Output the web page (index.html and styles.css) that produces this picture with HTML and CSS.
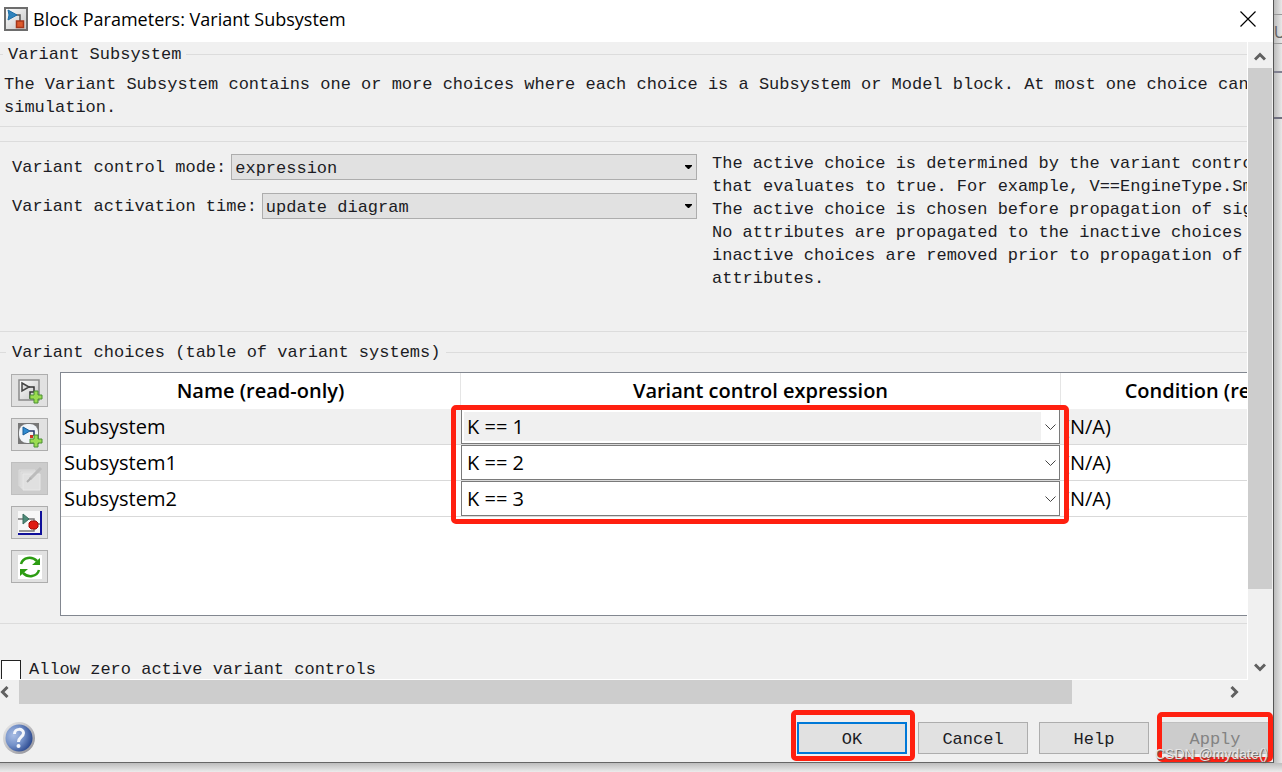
FILE: index.html
```html
<!DOCTYPE html>
<html lang="en">
<head>
  <meta charset="UTF-8" />
  <meta name="viewport" content="width=device-width, initial-scale=1.0" />
  <title>Block Parameters: Variant Subsystem</title>
  <link rel="stylesheet" href="styles.css">
</head>
<body>
  <div class="dialog">
    <header class="titlebar">
      <svg class="app-icon" width="24" height="24" viewBox="0 0 24 24">
        <defs><linearGradient id="tile" x2="1" y2="1"><stop stop-color="#fff"/><stop offset="1" stop-color="#c4c4c4"/></linearGradient></defs>
        <rect x="1" y="1" width="22" height="22" fill="url(#tile)" stroke="#6d6d6d" stroke-width="2"/>
        <path d="M10 8h6v6" fill="none" stroke="#555" stroke-width="1.500"/>
        <path d="M4 3l9 5-9 5 1-5z" fill="#2f83bd" stroke="#1c6fa8"/>
        <rect x="12.500" y="14" width="7" height="6.500" fill="#dc5a2c" stroke="#a5361a" stroke-width="1.500"/>
      </svg>
      <h1>Block Parameters: Variant Subsystem</h1>
      <button class="close" aria-label="Close">
        <svg width="16" height="16" viewBox="0 0 16 16"><path d="M.5.5l15 15M15.500.5l-15 15" stroke="#000" stroke-width="1.200"/></svg>
      </button>
    </header>

    <main class="scroll-area">
      <div class="pane">
        <section class="about">
          <h2 class="legend">Variant Subsystem</h2>
          <p>The Variant Subsystem contains one or more choices where each choice is a Subsystem or Model block. At most one choice can be<br>simulation.</p>
        </section>

        <section class="settings">
          <div class="fields">
            <div class="field">
              <label for="mode">Variant control mode:</label>
              <div class="drop">
                <select id="mode"><option>expression</option></select>
                <svg width="7" height="4" viewBox="0 0 7 4"><path d="M0 0h7v1L4 4H3L0 1z"/></svg>
              </div>
            </div>
            <div class="field">
              <label for="time">Variant activation time:</label>
              <div class="drop">
                <select id="time"><option>update diagram</option></select>
                <svg width="7" height="4" viewBox="0 0 7 4"><path d="M0 0h7v1L4 4H3L0 1z"/></svg>
              </div>
            </div>
          </div>
          <p>The active choice is determined by the variant control<br>that evaluates to true. For example, V==EngineType.Small<br>The active choice is chosen before propagation of signal<br>No attributes are propagated to the inactive choices and<br>inactive choices are removed prior to propagation of signal<br>attributes.</p>
        </section>

        <section class="choices">
          <h2 class="legend">Variant choices (table of variant systems)</h2>
          <div class="choices-body">
            <div class="tools">
              <button aria-label="Add subsystem choice">
                <svg width="26" height="26" viewBox="0 0 26 26">
                  <rect x="2" y="2" width="20" height="20" fill="url(#tile)" stroke="#8a8a8a" stroke-width="1.500"/>
                  <path d="M5 5l7 4-7 4z" fill="#ddd" stroke="#444" stroke-width="1.500"/><path d="M12 9h5v5h-4v6h4" fill="none" stroke="#333" stroke-width="1.500"/>
                  <path d="M17 13h4v4h4v4h-4v4h-4v-4h-4v-4h4z" fill="#9bdc50" stroke="#4b8f35"/>
                </svg>
              </button>
              <button aria-label="Add model choice">
                <svg width="26" height="26" viewBox="0 0 26 26">
                  <rect x="1" y="1" width="21" height="21" fill="#777"/>
                  <rect x="2" y="2" width="19" height="19" rx="8" fill="#f0f4f8"/>
                  <path d="M6 5l7 4-7 4z" fill="#2f8ad0" stroke="#175c98"/><path d="M13 9h4v5" fill="none" stroke="#236" stroke-width="1.500"/>
                  <rect x="13" y="13" width="3" height="3" fill="#c32"/>
                  <path d="M17 13h4v4h4v4h-4v4h-4v-4h-4v-4h4z" fill="#9bdc50" stroke="#4b8f35"/>
                </svg>
              </button>
              <button aria-label="Edit choice" disabled>
                <svg width="26" height="26" viewBox="0 0 26 26">
                  <path d="M2 4h16v16H2z" fill="#d4d4d4" stroke="#dcdcdc"/><path d="M4 6h16v16H4z" fill="#d9d9d9" stroke="#e2e2e2"/><path d="M6 8h17v16H6z" fill="#e0e0e0" stroke="#e8e8e8"/>
                  <path d="M13 13L24 2" stroke="#bcbcbc" stroke-width="3"/><path d="M10 16l4-4" stroke="#b0b0b0" stroke-width="2"/>
                </svg>
              </button>
              <button aria-label="Open block">
                <svg width="26" height="26" viewBox="0 0 26 26">
                  <rect x="1" y="1" width="24" height="24" fill="#f7f7f7"/>
                  <path d="M24 1v23H1" fill="none" stroke="#10109a" stroke-width="2"/>
                  <path d="M1 9h16v12H2M17 14h6" fill="none" stroke="#777" stroke-width="1.500"/>
                  <path d="M6 4l6 5-6 5z" fill="#4d8b78" stroke="#3a6d5e"/>
                  <path d="M14 11h5l2 2v4l-2 2h-5l-2-2v-4z" fill="#e0190f" stroke="#a01008"/>
                </svg>
              </button>
              <button aria-label="Refresh">
                <svg width="26" height="26" viewBox="0 0 26 26">
                  <rect x="1" y="1" width="24" height="24" fill="#fff"/>
                  <path d="M4 10C6 3 15 2 20 7M22 16c-2 7-11 8-16 3" fill="none" stroke="#2c9c12" stroke-width="2.500"/>
                  <path d="M23 4v7h-8zM3 22v-7h8z" fill="#2c9c12"/>
                </svg>
              </button>
            </div>
            <div class="table-box">
              <table>
                <thead>
                  <tr><th class="col-name">Name (read-only)</th><th class="col-expr">Variant control expression</th><th class="col-cond">Condition (read-only)</th></tr>
                </thead>
                <tbody>
                  <tr class="selected">
                    <td>Subsystem</td>
                    <td><div class="combo"><select aria-label="Subsystem expression"><option>K == 1</option></select><svg width="11" height="6" viewBox="0 0 11 6"><path d="M.5.5l5 5 5-5" fill="none" stroke="#444"/></svg></div></td>
                    <td>(N/A)</td>
                  </tr>
                  <tr>
                    <td>Subsystem1</td>
                    <td><div class="combo"><select aria-label="Subsystem1 expression"><option>K == 2</option></select><svg width="11" height="6" viewBox="0 0 11 6"><path d="M.5.5l5 5 5-5" fill="none" stroke="#444"/></svg></div></td>
                    <td>(N/A)</td>
                  </tr>
                  <tr>
                    <td>Subsystem2</td>
                    <td><div class="combo"><select aria-label="Subsystem2 expression"><option>K == 3</option></select><svg width="11" height="6" viewBox="0 0 11 6"><path d="M.5.5l5 5 5-5" fill="none" stroke="#444"/></svg></div></td>
                    <td>(N/A)</td>
                  </tr>
                </tbody>
              </table>
              <div class="mark mark-table"></div>
            </div>
          </div>
        </section>

        <div class="allow-zero">
          <input type="checkbox" id="allow-zero">
          <label for="allow-zero">Allow zero active variant controls</label>
        </div>
      </div>

      <div class="vbar">
        <svg width="12" height="9" viewBox="0 0 12 9"><path d="M1 7.500l5-5 5 5" fill="none" stroke="#606060" stroke-width="3"/></svg>
        <div class="vthumb"></div>
        <svg width="12" height="9" viewBox="0 0 12 9"><path d="M1 1.500l5 5 5-5" fill="none" stroke="#606060" stroke-width="3"/></svg>
      </div>
      <div class="hbar">
        <svg width="9" height="12" viewBox="0 0 9 12"><path d="M7.500 1l-5 5 5 5" fill="none" stroke="#606060" stroke-width="3"/></svg>
        <div class="hthumb"></div>
        <svg width="9" height="12" viewBox="0 0 9 12"><path d="M1.500 1l5 5-5 5" fill="none" stroke="#606060" stroke-width="3"/></svg>
      </div>
    </main>

    <footer class="actions">
      <button class="help-icon" aria-label="Help topics">
        <svg width="34" height="34" viewBox="0 0 34 34">
          <defs>
            <radialGradient id="ball" cx=".3" cy=".4" r=".75"><stop stop-color="#a9bde4"/><stop offset=".5" stop-color="#7390c8"/><stop offset="1" stop-color="#24428a"/></radialGradient>
            <linearGradient id="rim" x2="1" y2="1"><stop stop-color="#eee"/><stop offset="1" stop-color="#8b8b93"/></linearGradient>
          </defs>
          <circle cx="17" cy="17" r="16" fill="url(#rim)"/>
          <circle cx="17" cy="17" r="13.500" fill="url(#ball)"/>
          <path d="M12.500 13c0-6 9-6 9-1 0 4-5 4-5 9" fill="none" stroke="#f4f6fb" stroke-width="3"/>
          <circle cx="16.500" cy="25" r="2" fill="#f4f6fb"/>
        </svg>
      </button>
      <div class="action marked"><button class="default">OK</button></div>
      <div class="action"><button>Cancel</button></div>
      <div class="action"><button>Help</button></div>
      <div class="action marked last"><button disabled>Apply</button></div>
      <span class="watermark">CSDN @mydate()</span>
    </footer>
  </div>

  <aside class="behind">
    <div class="behind-top"></div>
    <div class="behind-tab">U</div>
    <div class="behind-bar"></div>
    <div class="behind-row"></div>
  </aside>
</body>
</html>
```
FILE: styles.css
```css
* { box-sizing: border-box; }
body { margin: 0; height: 100vh; display: grid; grid-template-columns: 1fr 8px; grid-template-rows: 1fr 9px; overflow: hidden; background: linear-gradient(#bdbdbd, #ececec) bottom / 100% 9px no-repeat #e8e8e8; font-family: "Liberation Mono", monospace; font-size: 17px; line-height: 23px; color: #1c1c24; }
h1, h2, p { margin: 0; font-size: inherit; font-weight: normal; }
button, select { font: inherit; color: inherit; margin: 0; border-radius: 0; }
svg { display: block; flex: none; }

.dialog { min-width: 0; min-height: 0; display: flex; flex-direction: column; background: #f0f0f0; border-right: 1px solid #555; border-bottom: 1px solid #666; }

.titlebar { display: flex; align-items: center; height: 42px; padding: 0 17px 4px 4px; background: #fff; }
.titlebar h1 { flex: 1; padding-left: 5px; font-family: "Open Sans", sans-serif; font-size: 18px; color: #000; }
.close { padding: 0; border: none; background: none; }

/* scrolled content with its two bars */
.scroll-area { flex: 1; min-height: 0; display: grid; grid-template-columns: 1fr 25px; grid-template-rows: 1fr 24px; }
.pane { min-width: 0; overflow: hidden; border-right: 1px solid #fff; border-bottom: 1px solid #fff; white-space: nowrap; }
.vbar { display: flex; flex-direction: column; align-items: center; padding: 10px 1px 8px 0; }
.vthumb { width: 24px; height: 521px; margin: 7px 0 auto; background: #cdcdcd; }
.hbar { display: flex; align-items: center; padding-right: 9px; }
.hthumb { width: 85%; height: 24px; margin: 0 auto 0 10px; background: #cdcdcd; }

.legend { display: flex; align-items: center; gap: 6px; }
.legend::before, .legend::after { content: ""; height: 1px; background: #dcdcdc; }
.legend::before { width: 6px; }
.legend::after { flex: 1; }

.about { height: 85px; padding-top: 1px; border-bottom: 1px solid #dcdcdc; }
.about .legend { gap: 5px; }
.about .legend::before { width: 3px; }
.about p { padding: 7px 4px 0; }

.settings { display: flex; gap: 15px; height: 191px; margin-top: 14px; padding: 10px 0 0 12px; border-top: 1px solid #dcdcdc; border-bottom: 1px solid #dcdcdc; }
.fields { flex: none; width: 685px; display: flex; flex-direction: column; gap: 13px; padding-top: 2px; }
.field { display: flex; align-items: center; gap: 5px; }
.drop { flex: 1; display: grid; align-items: center; }
.drop > *, .combo > * { grid-area: 1 / 1; }
.drop select { width: 100%; height: 26px; padding: 2px 3px 0; appearance: none; background: #e1e1e1; border: 1px solid #adadad; }
.drop svg, .combo svg { justify-self: end; pointer-events: none; }
.drop svg { margin-right: 5px; }

.choices { padding: 9px 0 7px; border-bottom: 1px solid #dcdcdc; }
.choices-body { display: flex; gap: 12px; padding-left: 11px; margin-top: 8px; }
.tools { flex: none; display: flex; flex-direction: column; gap: 11px; padding-top: 2px; }
.tools button { display: grid; place-items: center; width: 37px; height: 33px; padding: 0; background: #e1e1e1; border: 1px solid #adadad; }
.tools button:disabled { background: #ccc; border-color: #bfbfbf; }

.table-box { position: relative; flex: 1; height: 244px; background: #fff; border: 1px solid #828790; border-right: none; font-family: "Open Sans", sans-serif; font-size: 20px; color: #000; }
table { table-layout: fixed; width: 1332px; border-collapse: separate; border-spacing: 0; }
th { height: 36px; padding: 0 0 2px; font-weight: 600; border-right: 1px solid #e5e5e5; }
td { height: 36px; padding: 0 3px; border-bottom: 1px solid #d9d9d9; }
td:nth-child(2) { padding: 0; }
.col-name { width: 400px; }
.col-expr { width: 600px; }
.selected { background: #f0f0f0; }
.combo { display: grid; align-items: center; margin-right: 1px; }
.combo select { width: 100%; height: 35px; padding: 0 5px; appearance: none; background: #fff; border: 1px solid #7a7a7a; }
.selected .combo select { background: linear-gradient(#f0f0f0, #f0f0f0) 2px 2px / calc(100% - 20px) 29px no-repeat #fff; }
.combo svg { margin-right: 4px; }

/* red call-outs */
.mark { position: absolute; border: 5px solid #ff2010; border-radius: 5px; pointer-events: none; }
.mark-table { top: 32px; left: 390px; width: 618px; height: 119px; }

.allow-zero { display: flex; align-items: center; gap: 8px; padding: 34px 0 0 1px; }
.allow-zero input { appearance: none; width: 20px; height: 20px; margin: 0; background: #fff; border: 1px solid #222; }

.actions { position: relative; display: flex; justify-content: flex-end; gap: 11px; height: 58px; padding: 18px 3px 0 2px; }
.help-icon { align-self: flex-start; margin: -1px auto 0 0; padding: 0; border: none; background: none; }
.action { position: relative; width: 110px; height: 32px; }
.action button { width: 100%; height: 100%; padding: 2px 0 0; background: #e1e1e1; border: 1px solid #adadad; }
.action .default { border: 2px solid #0078d7; }
.action button:disabled { background: #ccc; border-color: #bfbfbf; color: #838383; }
.marked::after { content: ""; position: absolute; inset: -12px -8px -7px -6px; border: 5px solid #ff2010; border-radius: 5px; pointer-events: none; }
.last::after { inset: -10px -3px -8px -3px; }
.watermark { position: absolute; right: 5px; bottom: -4px; font-family: "Liberation Sans", sans-serif; font-size: 14px; color: #e4e4e4; text-shadow: 1px 1px 1px #555; }

/* edge of the window underneath */
.behind { overflow: hidden; background: linear-gradient(90deg, #bcbcbc, #e8e8e8); font-family: "Liberation Sans", sans-serif; font-size: 16px; color: #666; }
.behind-top { height: 15px; border-bottom: 1px solid #999; }
.behind-tab { height: 29px; padding-top: 6px; border-bottom: 1px solid #999; }
.behind-bar { height: 29px; border-bottom: 2px solid #808090; }
.behind-row { height: 46px; border-bottom: 2px solid #707080; }
```
